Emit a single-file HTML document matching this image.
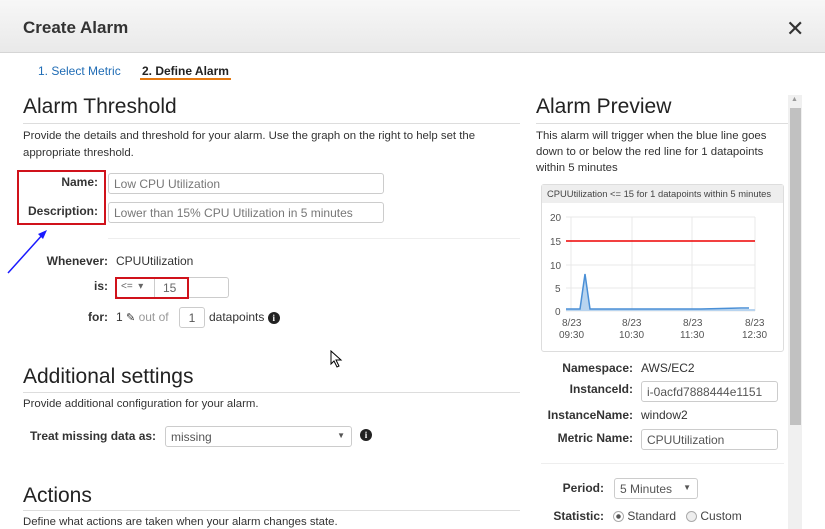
<!DOCTYPE html>
<html><head><style>
*{margin:0;padding:0;box-sizing:border-box}
body{width:825px;height:529px;overflow:hidden;background:#fff;font-family:"Liberation Sans",Arial,sans-serif;color:#333;position:relative}
.a{position:absolute;white-space:nowrap}
.hdr{left:0;top:0;width:825px;height:53px;background:linear-gradient(#f7f7f7,#e9e9e9);border-bottom:1px solid #d5d5d5}
.s12{font-size:12px}
.p{font-size:11.4px}
.b{font-weight:bold}
.h2{font-size:21px;color:#222}
.hr{height:1px;background:#ddd}
.inp{border:1px solid #ccc;border-radius:3px;background:#fff;color:#777;font-size:12px;padding:3px 5px;height:21px}
.red{border:2px solid #d0121b}
.r{text-align:right}
</style></head><body>
<div class="a hdr"></div>
<div class="a b" style="left:23px;top:18px;font-size:17px;color:#333">Create Alarm</div>
<div class="a" style="left:786px;top:16px;font-size:22px;color:#333">✕</div>
<div class="a s12" style="left:38px;top:64px;color:#1f6cb5">1. Select Metric</div>
<div class="a s12 b" style="left:142px;top:64px;color:#222">2. Define Alarm</div>
<div class="a" style="left:140px;top:78px;width:91px;height:2px;background:#e47911"></div>

<div class="a h2" style="left:23px;top:95px">Alarm Threshold</div>
<div class="a hr" style="left:23px;top:123px;width:497px"></div>
<div class="a p" style="left:23px;top:128px;line-height:17px;white-space:normal;width:470px">Provide the details and threshold for your alarm. Use the graph on the right to help set the appropriate threshold.</div>
<div class="a s12 b r" style="left:20px;top:175px;width:78px">Name:</div>
<div class="a s12 b r" style="left:20px;top:204px;width:78px">Description:</div>
<div class="a red" style="left:17px;top:170px;width:89px;height:55px"></div>
<div class="a inp" style="left:108px;top:173px;width:276px">Low CPU Utilization</div>
<div class="a inp" style="left:108px;top:202px;width:276px">Lower than 15% CPU Utilization in 5 minutes</div>
<div class="a hr" style="left:108px;top:238px;width:412px;background:#eee"></div>
<svg class="a" style="left:0;top:225px" width="60" height="55"><line x1="8" y1="48" x2="44" y2="8" stroke="#1a1aff" stroke-width="1.5"/><polygon points="47,5 38,9 43,14" fill="#1a1aff"/></svg>
<div class="a s12 b r" style="left:20px;top:254px;width:88px">Whenever:</div>
<div class="a s12" style="left:116px;top:254px">CPUUtilization</div>
<div class="a s12 b r" style="left:20px;top:279px;width:88px">is:</div>
<div class="a inp" style="left:116px;top:277px;width:113px;padding:0"></div>
<div class="a" style="left:117px;top:278px;width:38px;height:19px;border-right:1px solid #ccc;font-size:10px;color:#666;padding:3px 4px">&lt;= &nbsp;▾</div>
<div class="a s12" style="left:163px;top:281px;color:#666">15</div>
<div class="a red" style="left:115px;top:277px;width:74px;height:22px"></div>
<div class="a s12 b r" style="left:20px;top:310px;width:88px">for:</div>
<div class="a s12" style="left:116px;top:310px">1 <span style="font-size:11px">✎</span> <span style="color:#999">out of</span></div>
<div class="a inp" style="left:179px;top:307px;width:26px;text-align:center;padding:3px 0;color:#555">1</div>
<div class="a s12" style="left:209px;top:310px">datapoints <span style="display:inline-block;width:12px;height:12px;border-radius:6px;background:#222;color:#fff;font-size:9px;text-align:center;line-height:12px;font-weight:bold;font-family:'Liberation Serif',serif">i</span></div>

<svg class="a" style="left:330px;top:350px" width="14" height="18"><path d="M1 1 L1 14 L4 11 L7 17 L9 16 L6 10 L11 10 Z" fill="#fff" stroke="#000" stroke-width="1"/></svg>

<div class="a h2" style="left:23px;top:365px">Additional settings</div>
<div class="a hr" style="left:23px;top:392px;width:497px"></div>
<div class="a p" style="left:23px;top:398px">Provide additional configuration for your alarm.</div>
<div class="a s12 b" style="left:30px;top:429px">Treat missing data as:</div>
<div class="a inp" style="left:165px;top:426px;width:187px;color:#555">missing<span style="position:absolute;right:6px;top:4px;font-size:8px">▼</span></div>
<div class="a" style="left:360px;top:429px;width:12px;height:12px;border-radius:6px;background:#222;color:#fff;font-size:9px;text-align:center;line-height:12px;font-weight:bold;font-family:'Liberation Serif',serif">i</div>
<div class="a h2" style="left:23px;top:484px">Actions</div>
<div class="a hr" style="left:23px;top:510px;width:497px"></div>
<div class="a p" style="left:23px;top:516px">Define what actions are taken when your alarm changes state.</div>

<div class="a h2" style="left:536px;top:95px">Alarm Preview</div>
<div class="a hr" style="left:536px;top:123px;width:252px"></div>
<div class="a p" style="left:536px;top:128px;line-height:16px;white-space:normal;width:250px">This alarm will trigger when the blue line goes down to or below the red line for 1 datapoints within 5 minutes</div>
<div class="a" style="left:541px;top:184px;width:243px;height:168px;border:1px solid #ddd;border-radius:3px"></div>
<div class="a" style="left:542px;top:185px;width:241px;height:18px;background:#eee;font-size:9.4px;color:#444;padding:3px 0 0 5px">CPUUtilization &lt;= 15 for 1 datapoints within 5 minutes</div>
<svg class="a" style="left:541px;top:205px" width="243" height="140" font-family="Liberation Sans" font-size="10" fill="#555">
<g stroke="#e8e8e8"><line x1="25" y1="12" x2="214" y2="12"/><line x1="25" y1="36" x2="214" y2="36"/><line x1="25" y1="60" x2="214" y2="60"/><line x1="25" y1="83" x2="214" y2="83"/><line x1="25" y1="106" x2="214" y2="106"/><line x1="30" y1="12" x2="30" y2="106"/><line x1="91" y1="12" x2="91" y2="106"/><line x1="151" y1="12" x2="151" y2="106"/><line x1="214" y1="12" x2="214" y2="106"/></g>
<text x="9" y="16">20</text><text x="9" y="40">15</text><text x="9" y="64">10</text><text x="14" y="87">5</text><text x="14" y="110">0</text>
<line x1="25" y1="36" x2="214" y2="36" stroke="#e00" stroke-width="1.5"/>
<path d="M25 104 L39 104 L44 69 L49 104 L214 104 L214 106 L25 106Z" fill="#b8d4ef"/>
<path d="M25 104 L39 104 L44 69 L49 104 L120 104 L160 104 L200 103 L208 103" fill="none" stroke="#4a8fd6" stroke-width="1.5"/>
<text x="21" y="121">8/23</text><text x="18" y="133">09:30</text>
<text x="81" y="121">8/23</text><text x="78" y="133">10:30</text>
<text x="142" y="121">8/23</text><text x="139" y="133">11:30</text>
<text x="204" y="121">8/23</text><text x="201" y="133">12:30</text>
</svg>
<div class="a s12 b r" style="left:540px;top:361px;width:93px">Namespace:</div>
<div class="a s12" style="left:641px;top:361px">AWS/EC2</div>
<div class="a s12 b r" style="left:540px;top:382px;width:93px">InstanceId:</div>
<div class="a inp" style="left:641px;top:381px;width:137px;color:#555">i-0acfd7888444e1151</div>
<div class="a s12 b r" style="left:540px;top:408px;width:93px">InstanceName:</div>
<div class="a s12" style="left:641px;top:408px">window2</div>
<div class="a s12 b r" style="left:540px;top:431px;width:93px">Metric Name:</div>
<div class="a inp" style="left:641px;top:429px;width:137px;color:#555">CPUUtilization</div>
<div class="a hr" style="left:541px;top:463px;width:243px;background:#eee"></div>
<div class="a s12 b r" style="left:540px;top:481px;width:64px">Period:</div>
<div class="a inp" style="left:614px;top:478px;width:84px;color:#555">5 Minutes<span style="position:absolute;right:6px;top:4px;font-size:8px">▼</span></div>
<div class="a s12 b r" style="left:540px;top:509px;width:64px">Statistic:</div>
<div class="a s12" style="left:613px;top:509px;color:#444"><span style="display:inline-block;width:11px;height:11px;border:1px solid #aaa;border-radius:6px;vertical-align:-2px;background:radial-gradient(#555 2px,#fff 2.5px)"></span> Standard &nbsp;&nbsp;<span style="display:inline-block;width:11px;height:11px;border:1px solid #aaa;border-radius:6px;vertical-align:-2px;background:#eee"></span> Custom</div>

<div class="a" style="left:788px;top:95px;width:14px;height:434px;background:#f0f0f0"></div>
<div class="a" style="left:790px;top:108px;width:11px;height:317px;background:#c1c1c1"></div>
<div class="a" style="left:791px;top:96px;font-size:7px;color:#999">▲</div>
</body></html>
